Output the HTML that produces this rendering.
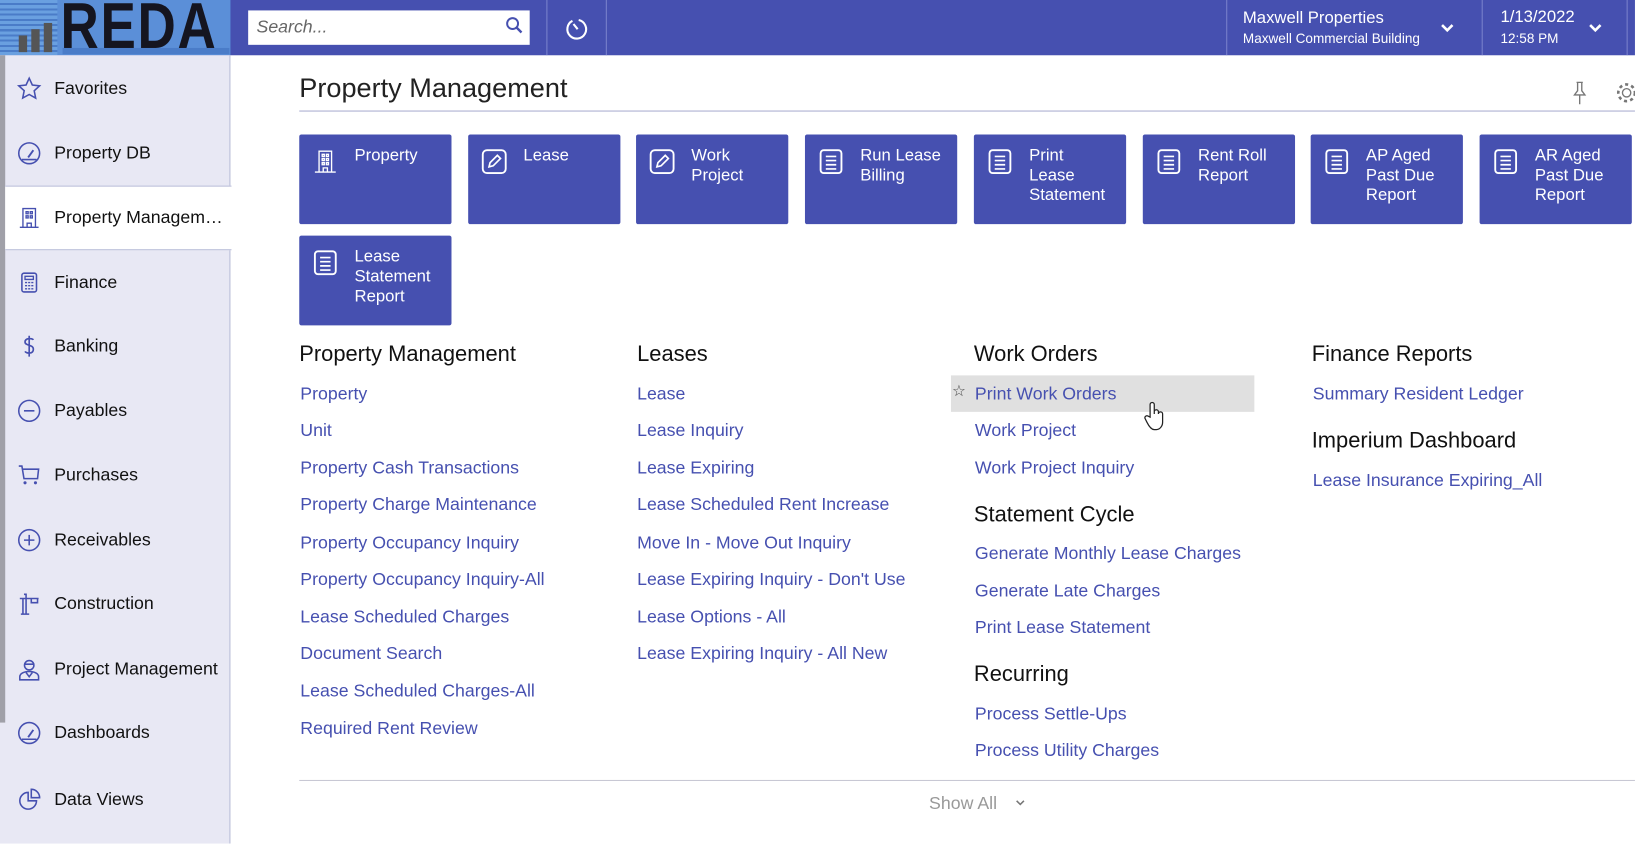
<!DOCTYPE html>
<html><head><meta charset="utf-8"><style>
*{box-sizing:border-box;margin:0;padding:0}
html,body{width:1635px;height:844px;overflow:hidden;background:#fff;font-family:"Liberation Sans",Arial,sans-serif}
#w{position:absolute;left:0;top:0;width:1568px;height:809px;transform:scale(1.0427);transform-origin:0 0}
.a{position:absolute}
.hdr{left:0;top:0;width:1568px;height:53px;background:#4650b0}
.vd{top:0;width:1px;height:53px;background:#7a82cc}
.side{left:0;top:53px;width:221px;height:756px;background:#e8e8f4;border-right:1px solid #b8bcd8}
.gb{left:0;top:53px;width:5px;height:640px;background:#a0a0a8}
.si{position:absolute;left:5px;width:216px;height:62px;font-size:17px;color:#111;display:flex;align-items:center}
.si svg{position:absolute;left:11px;width:24px;height:24px}
.si span{position:absolute;left:47px;white-space:nowrap}
.tile{position:absolute;width:146px;height:86px;background:#4650b0;border-radius:2px;color:#fff;font-size:16px;line-height:19px}
.tile svg{position:absolute;left:12px;top:13px;width:26px;height:26px}
.tile div{position:absolute;left:53px;top:11px}
.h{position:absolute;font-size:21px;color:#111}
.l{position:absolute;font-size:17px;color:#4650b0;white-space:nowrap}
</style></head><body><div id="w">
<div class="a hdr"></div>
<div class="a" style="left:0;top:0;width:221px;height:53px;background:#5b8fd8;overflow:hidden">
 <div class="a" style="left:0;top:0;width:55px;height:53px;background:repeating-linear-gradient(0deg,#6aa0e0 0 3px,#4a7cc8 3px 5px)"></div>
 <div class="a" style="left:18px;top:34px;width:8px;height:16px;background:#555"></div>
 <div class="a" style="left:30px;top:28px;width:8px;height:22px;background:#555"></div>
 <div class="a" style="left:42px;top:22px;width:8px;height:28px;background:#555"></div>
 <div class="a" style="left:58px;top:-10px;font-size:62px;font-weight:bold;color:#151520;transform:scaleX(0.82);transform-origin:0 0;letter-spacing:2px">REDA</div>
 <div class="a" style="left:60px;top:46px;width:160px;height:6px;background:#4a7cc8"></div>
</div>
<div class="a" style="left:238px;top:10px;width:270px;height:33px;background:#fff"></div>
<div class="a" style="left:246px;top:16px;font-size:17px;font-style:italic;color:#666">Search...</div>
<svg class="a" style="left:484px;top:15px" width="19" height="19" viewBox="0 0 20 20"><circle cx="8" cy="8" r="5.5" fill="none" stroke="#4650b0" stroke-width="2"/><path d="M12 12l5 5" stroke="#4650b0" stroke-width="2.4"/></svg>
<div class="a vd" style="left:524px"></div><div class="a vd" style="left:581px"></div>
<svg class="a" style="left:540px;top:15px" width="26" height="26" viewBox="0 0 26 26"><path d="M9 5A9 9 0 1 0 15 4.2" fill="none" stroke="#fff" stroke-width="2"/><path d="M10 8l4 5" stroke="#fff" stroke-width="2"/></svg>
<div class="a vd" style="left:1176px"></div><div class="a vd" style="left:1421px"></div><div class="a vd" style="left:1560px"></div>
<div class="a" style="left:1192px;top:9px;color:#fff;font-size:16px">Maxwell Properties</div>
<div class="a" style="left:1192px;top:29px;color:#fff;font-size:13px">Maxwell Commercial Building</div>
<svg class="a" style="left:1381px;top:22px" width="14" height="10" viewBox="0 0 14 10"><path d="M2 2l5 5 5-5" fill="none" stroke="#fff" stroke-width="2.5"/></svg>
<div class="a" style="left:1439px;top:8px;color:#fff;font-size:16px">1/13/2022</div>
<div class="a" style="left:1439px;top:29px;color:#fff;font-size:13px">12:58 PM</div>
<svg class="a" style="left:1523px;top:22px" width="14" height="10" viewBox="0 0 14 10"><path d="M2 2l5 5 5-5" fill="none" stroke="#fff" stroke-width="2.5"/></svg>

<div class="a side"></div><div class="a gb"></div>
<div class="si" style="top:54px"><svg viewBox="0 0 24 24"><path d="M12 2l3 6.5 7 .8-5.2 4.8 1.4 7L12 17.6 5.8 21l1.4-7L2 9.3l7-.8z" fill="none" stroke="#4650b0" stroke-width="1.5"/></svg><span>Favorites</span></div>
<div class="si" style="top:116px"><svg viewBox="0 0 24 24"><circle cx="12" cy="12" r="10" fill="none" stroke="#4650b0" stroke-width="1.5"/><path d="M5 18h14" stroke="#4650b0" stroke-width="1.5"/><path d="M11 16l5-7" stroke="#4650b0" stroke-width="1.8"/></svg><span>Property DB</span></div>
<div class="si" style="top:178px;background:#fff;border-top:1px solid #b8bcd8;border-bottom:1px solid #b8bcd8;width:217px"><svg viewBox="0 0 24 24"><path d="M6 3h12v18H6zM3 21h18M9 6h2v2H9zM13 6h2v2h-2zM9 10h2v2H9zM13 10h2v2h-2zM10 17h4v4h-4z" fill="none" stroke="#4650b0" stroke-width="1.3"/></svg><span>Property Managem…</span></div>
<div class="si" style="top:240px"><svg viewBox="0 0 24 24"><rect x="5" y="3" width="14" height="18" rx="2" fill="none" stroke="#4650b0" stroke-width="1.5"/><path d="M8 6h8v3H8zM8 12h2M11 12h2M14 12h2M8 15h2M11 15h2M14 15h2M8 18h2M11 18h2M14 18h2" stroke="#4650b0" stroke-width="1.3" fill="none"/></svg><span>Finance</span></div>
<div class="si" style="top:301px"><svg viewBox="0 0 24 24"><path d="M16 6c-1-2-8-2-8 2s8 2 8 7-7 4-8 2M12 2v20" fill="none" stroke="#4650b0" stroke-width="1.6"/></svg><span>Banking</span></div>
<div class="si" style="top:363px"><svg viewBox="0 0 24 24"><circle cx="12" cy="12" r="10" fill="none" stroke="#4650b0" stroke-width="1.5"/><path d="M7 12h10" stroke="#4650b0" stroke-width="1.5"/></svg><span>Payables</span></div>
<div class="si" style="top:425px"><svg viewBox="0 0 24 24"><path d="M2 3h3l2 12h13l1-9H6" fill="none" stroke="#4650b0" stroke-width="1.5"/><circle cx="8" cy="19" r="1.5" fill="#4650b0"/><circle cx="18" cy="19" r="1.5" fill="#4650b0"/></svg><span>Purchases</span></div>
<div class="si" style="top:487px"><svg viewBox="0 0 24 24"><circle cx="12" cy="12" r="10" fill="none" stroke="#4650b0" stroke-width="1.5"/><path d="M7 12h10M12 7v10" stroke="#4650b0" stroke-width="1.5"/></svg><span>Receivables</span></div>
<div class="si" style="top:548px"><svg viewBox="0 0 24 24"><path d="M3 7h18M6 7v15M9 7v15M4 22h8M14 7v4h6v-4M7 3h2v4" fill="none" stroke="#4650b0" stroke-width="1.5"/></svg><span>Construction</span></div>
<div class="si" style="top:611px"><svg viewBox="0 0 24 24"><circle cx="12" cy="8" r="4.5" fill="none" stroke="#4650b0" stroke-width="1.5"/><path d="M7 7h10M3 22v-3c0-3 4-5 9-5s9 2 9 5v3zM9 15l3 4 3-4" fill="none" stroke="#4650b0" stroke-width="1.5"/></svg><span>Project Management</span></div>
<div class="si" style="top:672px"><svg viewBox="0 0 24 24"><circle cx="12" cy="12" r="10" fill="none" stroke="#4650b0" stroke-width="1.5"/><path d="M5 18h14" stroke="#4650b0" stroke-width="1.5"/><path d="M11 16l5-7" stroke="#4650b0" stroke-width="1.8"/></svg><span>Dashboards</span></div>
<div class="si" style="top:736px"><svg viewBox="0 0 24 24"><path d="M11 5a8 8 0 1 0 8 8h-8z" fill="none" stroke="#4650b0" stroke-width="1.5"/><path d="M14 2a8 8 0 0 1 8 8h-8z" fill="none" stroke="#4650b0" stroke-width="1.5"/></svg><span>Data Views</span></div>

<div class="a" style="left:287px;top:69px;font-size:26px;color:#222">Property Management</div>
<div class="a" style="left:287px;top:106px;width:1281px;height:1px;background:#a8acd0"></div>
<svg class="a" style="left:1506px;top:76px" width="18" height="26" viewBox="0 0 18 26"><path d="M6 3h6M7 3v8l-3 4h10l-3-4V3M9 15v9" fill="none" stroke="#777" stroke-width="1.3"/></svg>
<svg class="a" style="left:1548px;top:76px" width="22" height="26" viewBox="0 0 22 26"><circle cx="12" cy="13" r="4" fill="none" stroke="#777" stroke-width="1.3"/><circle cx="12" cy="13" r="8" fill="none" stroke="#777" stroke-width="2.5" stroke-dasharray="3 3"/></svg>

<div class="tile" style="left:287px;top:129px"><svg viewBox="0 0 26 26"><path d="M7 3h12v20H7zM3 23h20M10 6h2v2h-2zM14 6h2v2h-2zM10 10h2v2h-2zM14 10h2v2h-2zM10 14h2v2h-2zM14 14h2v2h-2zM11 19h4v4h-4z" fill="none" stroke="#fff" stroke-width="1.3"/></svg><div>Property</div></div>
<div class="tile" style="left:449px;top:129px"><svg viewBox="0 0 26 26"><rect x="2" y="2" width="22" height="22" rx="4" fill="none" stroke="#fff" stroke-width="1.8"/><path d="M8 18l1-4 7-7 3 3-7 7z" fill="none" stroke="#fff" stroke-width="1.6"/></svg><div>Lease</div></div>
<div class="tile" style="left:610px;top:129px"><svg viewBox="0 0 26 26"><rect x="2" y="2" width="22" height="22" rx="4" fill="none" stroke="#fff" stroke-width="1.8"/><path d="M8 18l1-4 7-7 3 3-7 7z" fill="none" stroke="#fff" stroke-width="1.6"/></svg><div>Work<br>Project</div></div>
<div class="tile" style="left:772px;top:129px"><svg viewBox="0 0 26 26"><rect x="3" y="2" width="20" height="22" rx="3" fill="none" stroke="#fff" stroke-width="1.8"/><path d="M8 8h10M8 12h10M8 16h10M8 20h10" stroke="#fff" stroke-width="1.6"/></svg><div>Run Lease<br>Billing</div></div>
<div class="tile" style="left:934px;top:129px"><svg viewBox="0 0 26 26"><rect x="3" y="2" width="20" height="22" rx="3" fill="none" stroke="#fff" stroke-width="1.8"/><path d="M8 8h10M8 12h10M8 16h10M8 20h10" stroke="#fff" stroke-width="1.6"/></svg><div>Print<br>Lease<br>Statement</div></div>
<div class="tile" style="left:1096px;top:129px"><svg viewBox="0 0 26 26"><rect x="3" y="2" width="20" height="22" rx="3" fill="none" stroke="#fff" stroke-width="1.8"/><path d="M8 8h10M8 12h10M8 16h10M8 20h10" stroke="#fff" stroke-width="1.6"/></svg><div>Rent Roll<br>Report</div></div>
<div class="tile" style="left:1257px;top:129px"><svg viewBox="0 0 26 26"><rect x="3" y="2" width="20" height="22" rx="3" fill="none" stroke="#fff" stroke-width="1.8"/><path d="M8 8h10M8 12h10M8 16h10M8 20h10" stroke="#fff" stroke-width="1.6"/></svg><div>AP Aged<br>Past Due<br>Report</div></div>
<div class="tile" style="left:1419px;top:129px"><svg viewBox="0 0 26 26"><rect x="3" y="2" width="20" height="22" rx="3" fill="none" stroke="#fff" stroke-width="1.8"/><path d="M8 8h10M8 12h10M8 16h10M8 20h10" stroke="#fff" stroke-width="1.6"/></svg><div>AR Aged<br>Past Due<br>Report</div></div>
<div class="tile" style="left:287px;top:226px"><svg viewBox="0 0 26 26"><rect x="3" y="2" width="20" height="22" rx="3" fill="none" stroke="#fff" stroke-width="1.8"/><path d="M8 8h10M8 12h10M8 16h10M8 20h10" stroke="#fff" stroke-width="1.6"/></svg><div>Lease<br>Statement<br>Report</div></div>

<div class="h" style="left:287px;top:328px">Property Management</div>
<div class="l" style="left:288px;top:368px">Property</div>
<div class="l" style="left:288px;top:403px">Unit</div>
<div class="l" style="left:288px;top:439px">Property Cash Transactions</div>
<div class="l" style="left:288px;top:474px">Property Charge Maintenance</div>
<div class="l" style="left:288px;top:511px">Property Occupancy Inquiry</div>
<div class="l" style="left:288px;top:546px">Property Occupancy Inquiry-All</div>
<div class="l" style="left:288px;top:582px">Lease Scheduled Charges</div>
<div class="l" style="left:288px;top:617px">Document Search</div>
<div class="l" style="left:288px;top:653px">Lease Scheduled Charges-All</div>
<div class="l" style="left:288px;top:689px">Required Rent Review</div>

<div class="h" style="left:611px;top:328px">Leases</div>
<div class="l" style="left:611px;top:368px">Lease</div>
<div class="l" style="left:611px;top:403px">Lease Inquiry</div>
<div class="l" style="left:611px;top:439px">Lease Expiring</div>
<div class="l" style="left:611px;top:474px">Lease Scheduled Rent Increase</div>
<div class="l" style="left:611px;top:511px">Move In - Move Out Inquiry</div>
<div class="l" style="left:611px;top:546px">Lease Expiring Inquiry - Don't Use</div>
<div class="l" style="left:611px;top:582px">Lease Options - All</div>
<div class="l" style="left:611px;top:617px">Lease Expiring Inquiry - All New</div>

<div class="h" style="left:934px;top:328px">Work Orders</div>
<div class="a" style="left:912px;top:360px;width:291px;height:35px;background:#e0e0e0"></div>
<div class="a" style="left:913px;top:366px;font-size:15px;color:#444">☆</div>
<div class="l" style="left:935px;top:368px">Print Work Orders</div>
<svg class="a" style="left:1097px;top:384px" width="22" height="30" viewBox="0 0 22 30"><path d="M6 16V4a2 2 0 0 1 4 0v9l0-2a2 2 0 0 1 4 0v2a2 2 0 0 1 4 0v8c0 4-3 7-6 7h-2c-3 0-5-3-7-7l-2-4a2 2 0 0 1 3-2z" fill="#fff" stroke="#222" stroke-width="1.2"/></svg>
<div class="l" style="left:935px;top:403px">Work Project</div>
<div class="l" style="left:935px;top:439px">Work Project Inquiry</div>
<div class="h" style="left:934px;top:482px">Statement Cycle</div>
<div class="l" style="left:935px;top:521px">Generate Monthly Lease Charges</div>
<div class="l" style="left:935px;top:557px">Generate Late Charges</div>
<div class="l" style="left:935px;top:592px">Print Lease Statement</div>
<div class="h" style="left:934px;top:635px">Recurring</div>
<div class="l" style="left:935px;top:675px">Process Settle-Ups</div>
<div class="l" style="left:935px;top:710px">Process Utility Charges</div>

<div class="h" style="left:1258px;top:328px">Finance Reports</div>
<div class="l" style="left:1259px;top:368px">Summary Resident Ledger</div>
<div class="h" style="left:1258px;top:411px">Imperium Dashboard</div>
<div class="l" style="left:1259px;top:451px">Lease Insurance Expiring_All</div>

<div class="a" style="left:287px;top:748px;width:1281px;height:1px;background:#c8c8d4"></div>
<div class="a" style="left:891px;top:761px;font-size:17px;color:#999">Show All</div>
<svg class="a" style="left:973px;top:766px" width="11" height="8" viewBox="0 0 11 8"><path d="M2 2l3.5 3.5L9 2" fill="none" stroke="#777" stroke-width="1.5"/></svg>
</div></body></html>
